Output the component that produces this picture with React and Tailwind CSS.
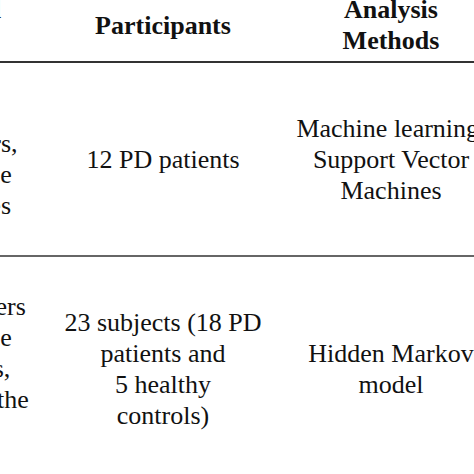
const rows = [
  {
    method: ["Temporal", "gait parameters,", "stride, cadence", "and gait stages"],
    participants: ["12 PD patients"],
    analysis: ["Machine learning,", "Support Vector", "Machines"],
  },
  {
    method: ["Stride parameters", "stride, cadence", "step durations,", "the velocity of the", "trunk"],
    participants: ["23 subjects (18 PD", "patients and", "5 healthy", "controls)"],
    analysis: ["Hidden Markov", "model"],
  },
];

const Cell = ({ lines }) => (
  <div className="flex flex-col items-center text-center">
    {lines.map((l, i) => (
      <span key={i} className="block whitespace-nowrap">{l}</span>
    ))}
  </div>
);

export default function App() {
  return (
    <div className="w-[474px] h-[474px] overflow-hidden bg-white font-['Liberation_Serif',serif] text-[26px] leading-[31px] text-[#111]">
      <div className="w-[685px] -ml-[180px] -mt-[17px]">
        <div className="grid grid-cols-[229px_228px_228px] items-center pt-[11px] pb-[5px] border-b-2 border-[#333] font-bold">
          <Cell lines={["Joint Model", "Features"]} />
          <Cell lines={["Participants"]} />
          <Cell lines={["Analysis", "Methods"]} />
        </div>
        {rows.map((r, i) => (
          <div
            key={i}
            className={
              i === 0
                ? "grid grid-cols-[229px_228px_228px] items-center py-[34px] border-b-2 border-[#666]"
                : "grid grid-cols-[229px_228px_228px] items-center py-[34px]"
            }
          >
            <Cell lines={r.method} />
            <Cell lines={r.participants} />
            <Cell lines={r.analysis} />
          </div>
        ))}
      </div>
    </div>
  );
}
